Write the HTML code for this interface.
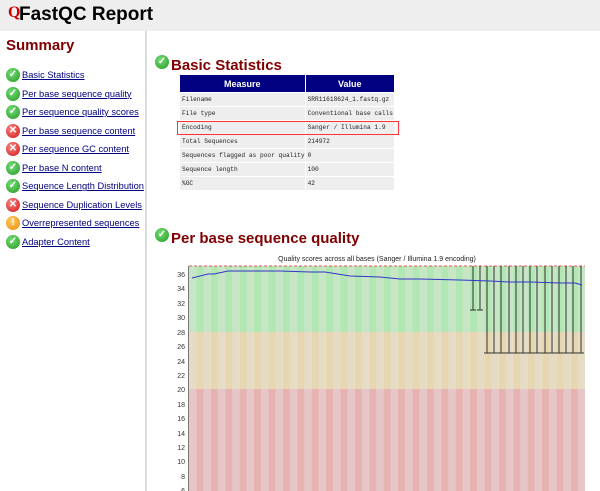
<!DOCTYPE html><html><head><meta charset="utf-8"><style>
*{margin:0;padding:0}
body{width:600px;height:491px;overflow:hidden;background:#fff;font-family:"Liberation Sans",sans-serif;position:relative}
.hdr{position:absolute;left:0;top:0;width:600px;height:31px;background:#eee}
.hdr h1{position:absolute;left:19px;top:4px;font-size:19px;font-weight:bold;color:#000}
.side{position:absolute;left:0;top:31px;width:145px;height:460px;border-right:2px solid #ddd}
.side h2{position:absolute;left:6px;top:6px;color:#800000;font-size:15px;font-weight:bold}
.side ul{list-style:none;position:absolute;left:6px;top:35px}
.side li{height:18.5px;font-size:9.3px;display:flex;align-items:center;white-space:nowrap}
.side a{color:#000080;text-decoration:underline;margin-left:2px}
.ic{width:14px;height:14px;border-radius:50%;display:inline-block;color:#fff;font-size:10px;font-weight:bold;text-align:center;line-height:14px;flex:none}
.g{background:radial-gradient(circle at 40% 35%,#7d7,#292)}
.r{background:radial-gradient(circle at 40% 35%,#f88,#c11)}
.o{background:radial-gradient(circle at 40% 35%,#fc6,#e80)}
h3{position:absolute;color:#800000;font-size:15px;font-weight:bold}
table{position:absolute;left:179px;top:74px;border-collapse:separate;border-spacing:1px;font-family:"Liberation Mono",monospace;font-size:6.2px;white-space:nowrap;table-layout:fixed;width:216px}
th{background:#000080;color:#fff;font-family:"Liberation Sans",sans-serif;font-size:9px;height:17px;padding:0}
td{background:#eee;height:13px;padding:0 2px;color:#222;overflow:hidden}
</style></head><body>
<div class="hdr"><div style="position:absolute;left:8px;top:4px;font:bold 16px 'Liberation Serif',serif;color:#c00">Q</div><h1>FastQC Report</h1></div>
<div class="side"><h2>Summary</h2><ul>
<li><span class="ic g">✓</span><a>Basic Statistics</a></li>
<li><span class="ic g">✓</span><a>Per base sequence quality</a></li>
<li><span class="ic g">✓</span><a>Per sequence quality scores</a></li>
<li><span class="ic r">✕</span><a>Per base sequence content</a></li>
<li><span class="ic r">✕</span><a>Per sequence GC content</a></li>
<li><span class="ic g">✓</span><a>Per base N content</a></li>
<li><span class="ic g">✓</span><a>Sequence Length Distribution</a></li>
<li><span class="ic r">✕</span><a>Sequence Duplication Levels</a></li>
<li><span class="ic o">!</span><a>Overrepresented sequences</a></li>
<li><span class="ic g">✓</span><a>Adapter Content</a></li>
</ul></div>
<span class="ic g" style="position:absolute;left:155px;top:55px">✓</span>
<h3 style="left:171px;top:57px">Basic Statistics</h3>
<table>
<col style="width:124px"><col style="width:88px">
<tr><th>Measure</th><th>Value</th></tr>
<tr><td>Filename</td><td>SRR11618624_1.fastq.gz</td></tr>
<tr><td>File type</td><td>Conventional base calls</td></tr>
<tr><td>Encoding</td><td>Sanger / Illumina 1.9</td></tr>
<tr><td>Total Sequences</td><td>214972</td></tr>
<tr><td>Sequences flagged as poor quality</td><td>0</td></tr>
<tr><td>Sequence length</td><td>100</td></tr>
<tr><td>%GC</td><td>42</td></tr>
</table>
<div style="position:absolute;left:177px;top:121px;width:220px;height:12px;border:1.5px solid #f33"></div>
<span class="ic g" style="position:absolute;left:155px;top:228px">✓</span>
<h3 style="left:171px;top:230px">Per base sequence quality</h3>
<svg style="position:absolute;left:150px;top:250px" width="450" height="241" font-family="Liberation Sans" font-size="7">
<defs>
<pattern id="pg" x="39" width="14.4" height="10" patternUnits="userSpaceOnUse"><rect width="7.2" height="10" fill="#c6e6c6"/><rect x="7.2" width="7.2" height="10" fill="#b2e6b2"/></pattern>
<pattern id="po" x="39" width="14.4" height="10" patternUnits="userSpaceOnUse"><rect width="7.2" height="10" fill="#e6dcc6"/><rect x="7.2" width="7.2" height="10" fill="#e6d7b2"/></pattern>
<pattern id="pr" x="39" width="14.4" height="10" patternUnits="userSpaceOnUse"><rect width="7.2" height="10" fill="#e6c6c6"/><rect x="7.2" width="7.2" height="10" fill="#e6b2b2"/></pattern>
</defs>
<text x="227" y="11" text-anchor="middle" fill="#222">Quality scores across all bases (Sanger / Illumina 1.9 encoding)</text>
<rect x="39" y="16" width="396" height="66" fill="url(#pg)"/>
<rect x="39" y="82" width="396" height="57" fill="url(#po)"/>
<rect x="39" y="139" width="396" height="102" fill="url(#pr)"/>
<line x1="39" y1="16" x2="435" y2="16" stroke="#e55" stroke-dasharray="3,2"/>
<line x1="38.5" y1="16" x2="38.5" y2="241" stroke="#777"/>
<g fill="#333" text-anchor="end">
<text x="35" y="27">36</text><text x="35" y="41">34</text><text x="35" y="56">32</text><text x="35" y="70">30</text><text x="35" y="85">28</text><text x="35" y="99">26</text><text x="35" y="114">24</text><text x="35" y="128">22</text><text x="35" y="142">20</text><text x="35" y="157">18</text><text x="35" y="171">16</text><text x="35" y="186">14</text><text x="35" y="200">12</text><text x="35" y="214">10</text><text x="35" y="229">8</text><text x="35" y="243">6</text>
</g>
<g stroke="#333" stroke-width="1" fill="none">
<path d="M323 16V60M330 16V60M320 60h6M327 60h6"/>
<path d="M337 16V103M344 16V103M351 16V103M359 16V103M366 16V103M373 16V103M380 16V103M387 16V103M395 16V103M402 16V103M409 16V103M416 16V103M423 16V103M431 16V103M334 103h100"/>
</g>
<polyline fill="none" stroke="#33c" stroke-width="1" points="42,28 58,24 64,24 78,21 100,21 130,21 160,22 175,22 200,26 230,27 250,29 270,29 310,30 340,31 360,32 380,32 410,33 425,33 432,35"/>
</svg>
</body></html>
